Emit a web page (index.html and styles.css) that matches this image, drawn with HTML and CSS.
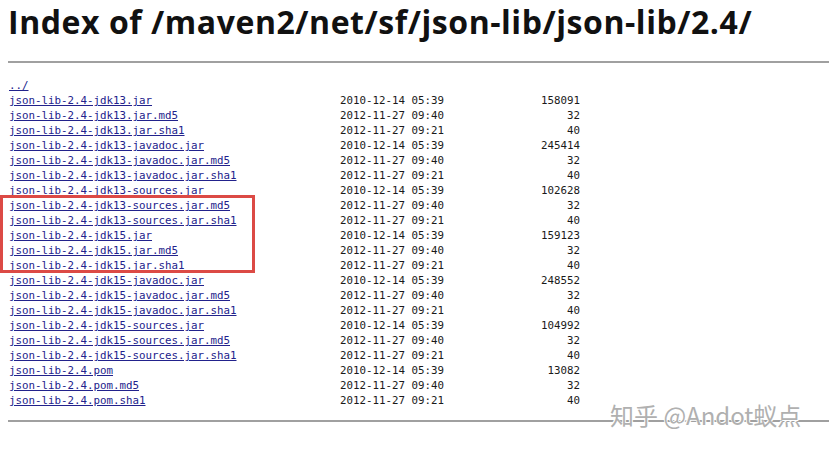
FILE: index.html
```html
<!DOCTYPE html>
<html>
<head>
<meta charset="utf-8">
<title>Index of /maven2/net/sf/json-lib/json-lib/2.4/</title>
<link rel="stylesheet" href="styles.css">
</head>
<body>
<h1 class="title">Index of /maven2/net/sf/json-lib/json-lib/2.4/</h1>
<hr class="rule">
<div class="listing">
  <div class="row"><a class="name" href="#">../</a><span class="date"></span><span class="size"></span></div>
  <div class="row"><a class="name" href="#">json-lib-2.4-jdk13.jar</a><span class="date">2010-12-14 05:39</span><span class="size">158091</span></div>
  <div class="row"><a class="name" href="#">json-lib-2.4-jdk13.jar.md5</a><span class="date">2012-11-27 09:40</span><span class="size">32</span></div>
  <div class="row"><a class="name" href="#">json-lib-2.4-jdk13.jar.sha1</a><span class="date">2012-11-27 09:21</span><span class="size">40</span></div>
  <div class="row"><a class="name" href="#">json-lib-2.4-jdk13-javadoc.jar</a><span class="date">2010-12-14 05:39</span><span class="size">245414</span></div>
  <div class="row"><a class="name" href="#">json-lib-2.4-jdk13-javadoc.jar.md5</a><span class="date">2012-11-27 09:40</span><span class="size">32</span></div>
  <div class="row"><a class="name" href="#">json-lib-2.4-jdk13-javadoc.jar.sha1</a><span class="date">2012-11-27 09:21</span><span class="size">40</span></div>
  <div class="row"><a class="name" href="#">json-lib-2.4-jdk13-sources.jar</a><span class="date">2010-12-14 05:39</span><span class="size">102628</span></div>
  <div class="row"><a class="name" href="#">json-lib-2.4-jdk13-sources.jar.md5</a><span class="date">2012-11-27 09:40</span><span class="size">32</span></div>
  <div class="row"><a class="name" href="#">json-lib-2.4-jdk13-sources.jar.sha1</a><span class="date">2012-11-27 09:21</span><span class="size">40</span></div>
  <div class="row"><a class="name" href="#">json-lib-2.4-jdk15.jar</a><span class="date">2010-12-14 05:39</span><span class="size">159123</span></div>
  <div class="row"><a class="name" href="#">json-lib-2.4-jdk15.jar.md5</a><span class="date">2012-11-27 09:40</span><span class="size">32</span></div>
  <div class="row"><a class="name" href="#">json-lib-2.4-jdk15.jar.sha1</a><span class="date">2012-11-27 09:21</span><span class="size">40</span></div>
  <div class="row"><a class="name" href="#">json-lib-2.4-jdk15-javadoc.jar</a><span class="date">2010-12-14 05:39</span><span class="size">248552</span></div>
  <div class="row"><a class="name" href="#">json-lib-2.4-jdk15-javadoc.jar.md5</a><span class="date">2012-11-27 09:40</span><span class="size">32</span></div>
  <div class="row"><a class="name" href="#">json-lib-2.4-jdk15-javadoc.jar.sha1</a><span class="date">2012-11-27 09:21</span><span class="size">40</span></div>
  <div class="row"><a class="name" href="#">json-lib-2.4-jdk15-sources.jar</a><span class="date">2010-12-14 05:39</span><span class="size">104992</span></div>
  <div class="row"><a class="name" href="#">json-lib-2.4-jdk15-sources.jar.md5</a><span class="date">2012-11-27 09:40</span><span class="size">32</span></div>
  <div class="row"><a class="name" href="#">json-lib-2.4-jdk15-sources.jar.sha1</a><span class="date">2012-11-27 09:21</span><span class="size">40</span></div>
  <div class="row"><a class="name" href="#">json-lib-2.4.pom</a><span class="date">2010-12-14 05:39</span><span class="size">13082</span></div>
  <div class="row"><a class="name" href="#">json-lib-2.4.pom.md5</a><span class="date">2012-11-27 09:40</span><span class="size">32</span></div>
  <div class="row"><a class="name" href="#">json-lib-2.4.pom.sha1</a><span class="date">2012-11-27 09:21</span><span class="size">40</span></div>
  <div class="highlight"></div>
</div>
<hr class="rule rule-bottom">
<div class="watermark">知乎 @Andot蚁点</div>
</body>
</html>
```
FILE: styles.css
```css
html, body {
  margin: 0;
  padding: 0;
  background: #fff;
}
body {
  padding: 0 0 0 8px;
  position: relative;
  height: 451px;
  overflow: hidden;
}
.title {
  margin: 0;
  padding-top: 2px;
  font-family: "Open Sans", "Noto Sans", sans-serif;
  font-weight: 700;
  font-size: 32px;
  line-height: 40px;
  color: #111;
  letter-spacing: 0.55px;
  white-space: nowrap;
}
.rule {
  border: 0;
  border-top: 2px solid #a0a0a0;
  margin: 19px 0 0 0;
  height: 0;
}
.listing {
  position: relative;
  margin-top: 15px;
  font-family: "DejaVu Sans Mono", "Liberation Mono", monospace;
  font-size: 10.8px;
}
.row {
  display: grid;
  grid-template-columns: 332px 104px 136px;
  height: 15px;
  line-height: 15px;
}
.name {
  color: #22228c;
  text-decoration: underline;
  white-space: nowrap;
  padding-left: 1px;
}
.date, .size {
  color: #1a1a1a;
  white-space: nowrap;
}
.size {
  text-align: right;
}
.highlight {
  position: absolute;
  left: -8px;
  top: 117px;
  width: 255px;
  height: 78px;
  border: 3px solid #dc4a45;
  box-sizing: border-box;
}
.rule-bottom {
  margin-top: 12px;
}
.watermark {
  position: absolute;
  left: 610px;
  top: 400px;
  font-family: "Noto Sans CJK SC", "Noto Sans", sans-serif;
  font-size: 24px;
  line-height: 30px;
  color: #b0b0b0;
  text-shadow: 1px 1px 0 #fff, -1px -1px 0 #fff;
  white-space: nowrap;
}
```
